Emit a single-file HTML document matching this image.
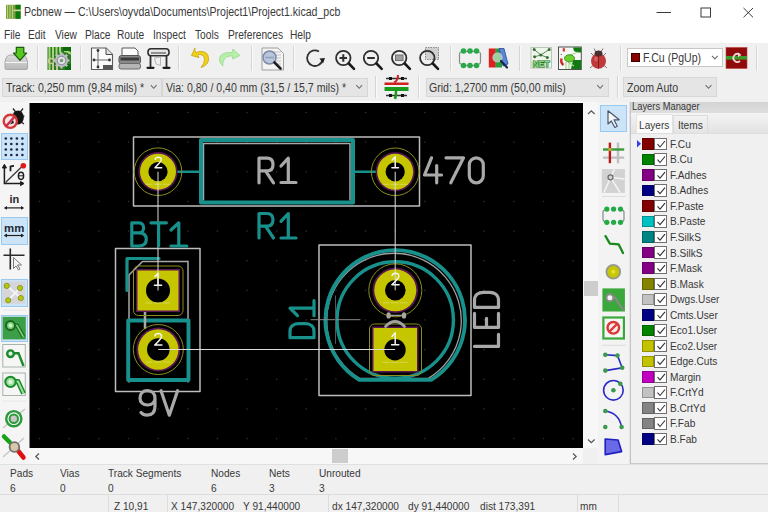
<!DOCTYPE html>
<html><head><meta charset="utf-8">
<style>
*{margin:0;padding:0;box-sizing:border-box}
html,body{width:768px;height:512px;overflow:hidden;background:#f0f0f0;font-family:"Liberation Sans",sans-serif;color:#000}
.a{position:absolute}
.t{position:absolute;white-space:nowrap;font-size:11px;line-height:13px;color:#383838;transform:scaleX(.92);transform-origin:0 0}
.combo{position:absolute;background:#e5e5e5;border:1px solid #d6d6d6}
.sep{position:absolute;width:1px;background:#d5d5d5;border-right:1px solid #fafafa;box-sizing:content-box}
.sw{position:absolute;width:12px;height:11.5px;left:642px;border:1px solid rgba(0,0,0,.25)}
.cb{position:absolute;width:12.5px;height:12.5px;left:654.3px;background:#fff;border:1px solid #707070}
.T{font-size:12px;line-height:14px;transform:scaleX(.88);color:#383838}

</style></head>
<body>
<div class="a" style="left:0;top:0;width:768px;height:43px;background:#fff"></div>
<div class="a" style="left:0;top:43px;width:768px;height:59px;background:#f0f0f0"></div>
<!-- toolbar separators -->
<div class="sep" style="left:37px;top:46px;height:25px"></div>
<div class="sep" style="left:80px;top:46px;height:25px"></div>
<div class="sep" style="left:178px;top:46px;height:25px"></div>
<div class="sep" style="left:251px;top:46px;height:25px"></div>
<div class="sep" style="left:293px;top:46px;height:25px"></div>
<div class="sep" style="left:450px;top:46px;height:25px"></div>
<div class="sep" style="left:519px;top:46px;height:25px"></div>
<div class="sep" style="left:620px;top:46px;height:25px"></div>
<div class="sep" style="left:756px;top:46px;height:25px"></div>
<div class="sep" style="left:375px;top:76px;height:22px"></div>
<div class="sep" style="left:418px;top:76px;height:22px"></div>
<div class="sep" style="left:617px;top:76px;height:22px"></div>
<!-- combos -->
<div class="combo" style="left:2px;top:78px;width:160px;height:19px"></div>
<div class="combo" style="left:162px;top:78px;width:206px;height:19px"></div>
<div class="combo" style="left:426px;top:78px;width:183px;height:19px"></div>
<div class="combo" style="left:623px;top:77px;width:94px;height:20px"></div>
<div class="a" style="left:627px;top:48px;width:96px;height:19px;background:#fff;border:1px solid #c8c8c8"></div>
<div class="a" style="left:631px;top:53px;width:9px;height:9px;background:#8a0000;border:1px solid #3a0000"></div>
<!-- left toolbar column -->
<div class="a" style="left:27px;top:100.7px;width:556px;height:348px;background:#fafafa"></div>
<div class="a" style="left:0;top:102px;width:29px;height:362px;background:#f5f5f5"></div>
<!-- scrollbars -->
<div class="a" style="left:583px;top:102px;width:15px;height:346px;background:#f7f7f7"></div>
<div class="a" style="left:584px;top:281px;width:14px;height:15px;background:#cdcdcd"></div>
<div class="a" style="left:27px;top:448px;width:556px;height:15.5px;background:#f7f7f7"></div>
<div class="a" style="left:332px;top:449px;width:16px;height:14px;background:#cdcdcd"></div>
<!-- right toolbar -->
<div class="a" style="left:598px;top:102px;width:32px;height:362px;background:#f3f3f3"></div>
<div class="a" style="left:629px;top:102px;width:1px;height:362px;background:#e4e4e4"></div><div class="a" style="left:630px;top:102px;width:1px;height:362px;background:#c4c4c4"></div>
<!-- layers manager -->
<div class="a" style="left:631px;top:102px;width:137px;height:11px;background:linear-gradient(#d4d4d4,#dedede)"></div>
<div class="a" style="left:631px;top:113px;width:137px;height:20px;background:linear-gradient(#f4f4f4,#e2e2e2)"></div>
<div class="a" style="left:636px;top:114px;width:37px;height:19px;background:#fbfbfb;border:1px solid #e4e4e4;border-bottom:none"></div>
<div class="a" style="left:673px;top:115px;width:35px;height:18px;background:linear-gradient(#f2f2f2,#e4e4e4);border:1px solid #dcdcdc;border-bottom:none"></div>
<div class="a" style="left:631px;top:133px;width:137px;height:331px;background:#f0f0f0;border-top:1px solid #dedede;border-bottom:1px solid #cacaca"></div>
<!-- highlighted toggle buttons -->
<div class="a" style="left:1px;top:133px;width:27px;height:27px;background:#cce4f7;border:1px solid #99c9ef"></div>
<div class="a" style="left:1px;top:217px;width:27px;height:28px;background:#cce4f7;border:1px solid #99c9ef"></div>
<div class="a" style="left:1px;top:279px;width:27px;height:28px;background:#cce4f7;border:1px solid #99c9ef"></div>
<div class="a" style="left:1px;top:315px;width:27px;height:27px;background:#cce4f7;border:1px solid #99c9ef"></div>
<div class="a" style="left:600px;top:105px;width:27px;height:27px;background:#cce4f7;border:1px solid #99c9ef"></div>
<!-- info panel / status lines -->
<div class="a" style="left:0;top:464px;width:768px;height:1px;background:#e0e0e0"></div>
<div class="a" style="left:0;top:494px;width:768px;height:1px;background:#dcdcdc"></div>
<div class="a" style="left:107.5px;top:495px;width:1px;height:17px;background:#dedede"></div>
<div class="a" style="left:167px;top:495px;width:1px;height:17px;background:#dedede"></div>
<div class="a" style="left:328px;top:495px;width:1px;height:17px;background:#dcdcdc"></div>
<div class="a" style="left:577px;top:495px;width:1px;height:17px;background:#dcdcdc"></div>
<div class="a" style="left:618px;top:495px;width:1px;height:17px;background:#dcdcdc"></div>
<!-- layer rows -->
<div class="sw" style="top:138.2px;background:#840000"></div>
<div class="cb" style="top:137.7px"></div>
<div class="sw" style="top:153.7px;background:#008400"></div>
<div class="cb" style="top:153.2px"></div>
<div class="sw" style="top:169.3px;background:#840084"></div>
<div class="cb" style="top:168.8px"></div>
<div class="sw" style="top:184.8px;background:#000084"></div>
<div class="cb" style="top:184.3px"></div>
<div class="sw" style="top:200.3px;background:#840000"></div>
<div class="cb" style="top:199.8px"></div>
<div class="sw" style="top:215.8px;background:#00c2c2"></div>
<div class="cb" style="top:215.3px"></div>
<div class="sw" style="top:231.4px;background:#008484"></div>
<div class="cb" style="top:230.9px"></div>
<div class="sw" style="top:246.9px;background:#840084"></div>
<div class="cb" style="top:246.4px"></div>
<div class="sw" style="top:262.4px;background:#840084"></div>
<div class="cb" style="top:261.9px"></div>
<div class="sw" style="top:278.0px;background:#848400"></div>
<div class="cb" style="top:277.5px"></div>
<div class="sw" style="top:293.5px;background:#c2c2c2"></div>
<div class="cb" style="top:293.0px"></div>
<div class="sw" style="top:309.0px;background:#000084"></div>
<div class="cb" style="top:308.5px"></div>
<div class="sw" style="top:324.6px;background:#008400"></div>
<div class="cb" style="top:324.1px"></div>
<div class="sw" style="top:340.1px;background:#c2c200"></div>
<div class="cb" style="top:339.6px"></div>
<div class="sw" style="top:355.6px;background:#c2c200"></div>
<div class="cb" style="top:355.1px"></div>
<div class="sw" style="top:371.1px;background:#c200c2"></div>
<div class="cb" style="top:370.6px"></div>
<div class="sw" style="top:386.7px;background:#c2c2c2"></div>
<div class="cb" style="top:386.2px"></div>
<div class="sw" style="top:402.2px;background:#848484"></div>
<div class="cb" style="top:401.7px"></div>
<div class="sw" style="top:417.7px;background:#848484"></div>
<div class="cb" style="top:417.2px"></div>
<div class="sw" style="top:433.3px;background:#000084"></div>
<div class="cb" style="top:432.8px"></div>

<svg class="a" style="left:29px;top:102px" width="554" height="346" viewBox="29 102 554 346">
<rect x="29.5" y="103" width="554" height="346" fill="#000"/>
<g fill="#333" id="grid"><rect x="38.8" y="111.8" width="1.3" height="1.3"/><rect x="38.8" y="141.4" width="1.3" height="1.3"/><rect x="38.8" y="171.1" width="1.3" height="1.3"/><rect x="38.8" y="200.8" width="1.3" height="1.3"/><rect x="38.8" y="230.4" width="1.3" height="1.3"/><rect x="38.8" y="260.0" width="1.3" height="1.3"/><rect x="38.8" y="289.7" width="1.3" height="1.3"/><rect x="38.8" y="319.3" width="1.3" height="1.3"/><rect x="38.8" y="349.0" width="1.3" height="1.3"/><rect x="38.8" y="378.6" width="1.3" height="1.3"/><rect x="38.8" y="408.3" width="1.3" height="1.3"/><rect x="38.8" y="437.9" width="1.3" height="1.3"/><rect x="68.5" y="111.8" width="1.3" height="1.3"/><rect x="68.5" y="141.4" width="1.3" height="1.3"/><rect x="68.5" y="171.1" width="1.3" height="1.3"/><rect x="68.5" y="200.8" width="1.3" height="1.3"/><rect x="68.5" y="230.4" width="1.3" height="1.3"/><rect x="68.5" y="260.0" width="1.3" height="1.3"/><rect x="68.5" y="289.7" width="1.3" height="1.3"/><rect x="68.5" y="319.3" width="1.3" height="1.3"/><rect x="68.5" y="349.0" width="1.3" height="1.3"/><rect x="68.5" y="378.6" width="1.3" height="1.3"/><rect x="68.5" y="408.3" width="1.3" height="1.3"/><rect x="68.5" y="437.9" width="1.3" height="1.3"/><rect x="98.1" y="111.8" width="1.3" height="1.3"/><rect x="98.1" y="141.4" width="1.3" height="1.3"/><rect x="98.1" y="171.1" width="1.3" height="1.3"/><rect x="98.1" y="200.8" width="1.3" height="1.3"/><rect x="98.1" y="230.4" width="1.3" height="1.3"/><rect x="98.1" y="260.0" width="1.3" height="1.3"/><rect x="98.1" y="289.7" width="1.3" height="1.3"/><rect x="98.1" y="319.3" width="1.3" height="1.3"/><rect x="98.1" y="349.0" width="1.3" height="1.3"/><rect x="98.1" y="378.6" width="1.3" height="1.3"/><rect x="98.1" y="408.3" width="1.3" height="1.3"/><rect x="98.1" y="437.9" width="1.3" height="1.3"/><rect x="127.8" y="111.8" width="1.3" height="1.3"/><rect x="127.8" y="141.4" width="1.3" height="1.3"/><rect x="127.8" y="171.1" width="1.3" height="1.3"/><rect x="127.8" y="200.8" width="1.3" height="1.3"/><rect x="127.8" y="230.4" width="1.3" height="1.3"/><rect x="127.8" y="260.0" width="1.3" height="1.3"/><rect x="127.8" y="289.7" width="1.3" height="1.3"/><rect x="127.8" y="319.3" width="1.3" height="1.3"/><rect x="127.8" y="349.0" width="1.3" height="1.3"/><rect x="127.8" y="378.6" width="1.3" height="1.3"/><rect x="127.8" y="408.3" width="1.3" height="1.3"/><rect x="127.8" y="437.9" width="1.3" height="1.3"/><rect x="157.4" y="111.8" width="1.3" height="1.3"/><rect x="157.4" y="141.4" width="1.3" height="1.3"/><rect x="157.4" y="171.1" width="1.3" height="1.3"/><rect x="157.4" y="200.8" width="1.3" height="1.3"/><rect x="157.4" y="230.4" width="1.3" height="1.3"/><rect x="157.4" y="260.0" width="1.3" height="1.3"/><rect x="157.4" y="289.7" width="1.3" height="1.3"/><rect x="157.4" y="319.3" width="1.3" height="1.3"/><rect x="157.4" y="349.0" width="1.3" height="1.3"/><rect x="157.4" y="378.6" width="1.3" height="1.3"/><rect x="157.4" y="408.3" width="1.3" height="1.3"/><rect x="157.4" y="437.9" width="1.3" height="1.3"/><rect x="187.1" y="111.8" width="1.3" height="1.3"/><rect x="187.1" y="141.4" width="1.3" height="1.3"/><rect x="187.1" y="171.1" width="1.3" height="1.3"/><rect x="187.1" y="200.8" width="1.3" height="1.3"/><rect x="187.1" y="230.4" width="1.3" height="1.3"/><rect x="187.1" y="260.0" width="1.3" height="1.3"/><rect x="187.1" y="289.7" width="1.3" height="1.3"/><rect x="187.1" y="319.3" width="1.3" height="1.3"/><rect x="187.1" y="349.0" width="1.3" height="1.3"/><rect x="187.1" y="378.6" width="1.3" height="1.3"/><rect x="187.1" y="408.3" width="1.3" height="1.3"/><rect x="187.1" y="437.9" width="1.3" height="1.3"/><rect x="216.7" y="111.8" width="1.3" height="1.3"/><rect x="216.7" y="141.4" width="1.3" height="1.3"/><rect x="216.7" y="171.1" width="1.3" height="1.3"/><rect x="216.7" y="200.8" width="1.3" height="1.3"/><rect x="216.7" y="230.4" width="1.3" height="1.3"/><rect x="216.7" y="260.0" width="1.3" height="1.3"/><rect x="216.7" y="289.7" width="1.3" height="1.3"/><rect x="216.7" y="319.3" width="1.3" height="1.3"/><rect x="216.7" y="349.0" width="1.3" height="1.3"/><rect x="216.7" y="378.6" width="1.3" height="1.3"/><rect x="216.7" y="408.3" width="1.3" height="1.3"/><rect x="216.7" y="437.9" width="1.3" height="1.3"/><rect x="246.3" y="111.8" width="1.3" height="1.3"/><rect x="246.3" y="141.4" width="1.3" height="1.3"/><rect x="246.3" y="171.1" width="1.3" height="1.3"/><rect x="246.3" y="200.8" width="1.3" height="1.3"/><rect x="246.3" y="230.4" width="1.3" height="1.3"/><rect x="246.3" y="260.0" width="1.3" height="1.3"/><rect x="246.3" y="289.7" width="1.3" height="1.3"/><rect x="246.3" y="319.3" width="1.3" height="1.3"/><rect x="246.3" y="349.0" width="1.3" height="1.3"/><rect x="246.3" y="378.6" width="1.3" height="1.3"/><rect x="246.3" y="408.3" width="1.3" height="1.3"/><rect x="246.3" y="437.9" width="1.3" height="1.3"/><rect x="276.0" y="111.8" width="1.3" height="1.3"/><rect x="276.0" y="141.4" width="1.3" height="1.3"/><rect x="276.0" y="171.1" width="1.3" height="1.3"/><rect x="276.0" y="200.8" width="1.3" height="1.3"/><rect x="276.0" y="230.4" width="1.3" height="1.3"/><rect x="276.0" y="260.0" width="1.3" height="1.3"/><rect x="276.0" y="289.7" width="1.3" height="1.3"/><rect x="276.0" y="319.3" width="1.3" height="1.3"/><rect x="276.0" y="349.0" width="1.3" height="1.3"/><rect x="276.0" y="378.6" width="1.3" height="1.3"/><rect x="276.0" y="408.3" width="1.3" height="1.3"/><rect x="276.0" y="437.9" width="1.3" height="1.3"/><rect x="305.6" y="111.8" width="1.3" height="1.3"/><rect x="305.6" y="141.4" width="1.3" height="1.3"/><rect x="305.6" y="171.1" width="1.3" height="1.3"/><rect x="305.6" y="200.8" width="1.3" height="1.3"/><rect x="305.6" y="230.4" width="1.3" height="1.3"/><rect x="305.6" y="260.0" width="1.3" height="1.3"/><rect x="305.6" y="289.7" width="1.3" height="1.3"/><rect x="305.6" y="319.3" width="1.3" height="1.3"/><rect x="305.6" y="349.0" width="1.3" height="1.3"/><rect x="305.6" y="378.6" width="1.3" height="1.3"/><rect x="305.6" y="408.3" width="1.3" height="1.3"/><rect x="305.6" y="437.9" width="1.3" height="1.3"/><rect x="335.3" y="111.8" width="1.3" height="1.3"/><rect x="335.3" y="141.4" width="1.3" height="1.3"/><rect x="335.3" y="171.1" width="1.3" height="1.3"/><rect x="335.3" y="200.8" width="1.3" height="1.3"/><rect x="335.3" y="230.4" width="1.3" height="1.3"/><rect x="335.3" y="260.0" width="1.3" height="1.3"/><rect x="335.3" y="289.7" width="1.3" height="1.3"/><rect x="335.3" y="319.3" width="1.3" height="1.3"/><rect x="335.3" y="349.0" width="1.3" height="1.3"/><rect x="335.3" y="378.6" width="1.3" height="1.3"/><rect x="335.3" y="408.3" width="1.3" height="1.3"/><rect x="335.3" y="437.9" width="1.3" height="1.3"/><rect x="364.9" y="111.8" width="1.3" height="1.3"/><rect x="364.9" y="141.4" width="1.3" height="1.3"/><rect x="364.9" y="171.1" width="1.3" height="1.3"/><rect x="364.9" y="200.8" width="1.3" height="1.3"/><rect x="364.9" y="230.4" width="1.3" height="1.3"/><rect x="364.9" y="260.0" width="1.3" height="1.3"/><rect x="364.9" y="289.7" width="1.3" height="1.3"/><rect x="364.9" y="319.3" width="1.3" height="1.3"/><rect x="364.9" y="349.0" width="1.3" height="1.3"/><rect x="364.9" y="378.6" width="1.3" height="1.3"/><rect x="364.9" y="408.3" width="1.3" height="1.3"/><rect x="364.9" y="437.9" width="1.3" height="1.3"/><rect x="394.6" y="111.8" width="1.3" height="1.3"/><rect x="394.6" y="141.4" width="1.3" height="1.3"/><rect x="394.6" y="171.1" width="1.3" height="1.3"/><rect x="394.6" y="200.8" width="1.3" height="1.3"/><rect x="394.6" y="230.4" width="1.3" height="1.3"/><rect x="394.6" y="260.0" width="1.3" height="1.3"/><rect x="394.6" y="289.7" width="1.3" height="1.3"/><rect x="394.6" y="319.3" width="1.3" height="1.3"/><rect x="394.6" y="349.0" width="1.3" height="1.3"/><rect x="394.6" y="378.6" width="1.3" height="1.3"/><rect x="394.6" y="408.3" width="1.3" height="1.3"/><rect x="394.6" y="437.9" width="1.3" height="1.3"/><rect x="424.2" y="111.8" width="1.3" height="1.3"/><rect x="424.2" y="141.4" width="1.3" height="1.3"/><rect x="424.2" y="171.1" width="1.3" height="1.3"/><rect x="424.2" y="200.8" width="1.3" height="1.3"/><rect x="424.2" y="230.4" width="1.3" height="1.3"/><rect x="424.2" y="260.0" width="1.3" height="1.3"/><rect x="424.2" y="289.7" width="1.3" height="1.3"/><rect x="424.2" y="319.3" width="1.3" height="1.3"/><rect x="424.2" y="349.0" width="1.3" height="1.3"/><rect x="424.2" y="378.6" width="1.3" height="1.3"/><rect x="424.2" y="408.3" width="1.3" height="1.3"/><rect x="424.2" y="437.9" width="1.3" height="1.3"/><rect x="453.9" y="111.8" width="1.3" height="1.3"/><rect x="453.9" y="141.4" width="1.3" height="1.3"/><rect x="453.9" y="171.1" width="1.3" height="1.3"/><rect x="453.9" y="200.8" width="1.3" height="1.3"/><rect x="453.9" y="230.4" width="1.3" height="1.3"/><rect x="453.9" y="260.0" width="1.3" height="1.3"/><rect x="453.9" y="289.7" width="1.3" height="1.3"/><rect x="453.9" y="319.3" width="1.3" height="1.3"/><rect x="453.9" y="349.0" width="1.3" height="1.3"/><rect x="453.9" y="378.6" width="1.3" height="1.3"/><rect x="453.9" y="408.3" width="1.3" height="1.3"/><rect x="453.9" y="437.9" width="1.3" height="1.3"/><rect x="483.5" y="111.8" width="1.3" height="1.3"/><rect x="483.5" y="141.4" width="1.3" height="1.3"/><rect x="483.5" y="171.1" width="1.3" height="1.3"/><rect x="483.5" y="200.8" width="1.3" height="1.3"/><rect x="483.5" y="230.4" width="1.3" height="1.3"/><rect x="483.5" y="260.0" width="1.3" height="1.3"/><rect x="483.5" y="289.7" width="1.3" height="1.3"/><rect x="483.5" y="319.3" width="1.3" height="1.3"/><rect x="483.5" y="349.0" width="1.3" height="1.3"/><rect x="483.5" y="378.6" width="1.3" height="1.3"/><rect x="483.5" y="408.3" width="1.3" height="1.3"/><rect x="483.5" y="437.9" width="1.3" height="1.3"/><rect x="513.2" y="111.8" width="1.3" height="1.3"/><rect x="513.2" y="141.4" width="1.3" height="1.3"/><rect x="513.2" y="171.1" width="1.3" height="1.3"/><rect x="513.2" y="200.8" width="1.3" height="1.3"/><rect x="513.2" y="230.4" width="1.3" height="1.3"/><rect x="513.2" y="260.0" width="1.3" height="1.3"/><rect x="513.2" y="289.7" width="1.3" height="1.3"/><rect x="513.2" y="319.3" width="1.3" height="1.3"/><rect x="513.2" y="349.0" width="1.3" height="1.3"/><rect x="513.2" y="378.6" width="1.3" height="1.3"/><rect x="513.2" y="408.3" width="1.3" height="1.3"/><rect x="513.2" y="437.9" width="1.3" height="1.3"/><rect x="542.9" y="111.8" width="1.3" height="1.3"/><rect x="542.9" y="141.4" width="1.3" height="1.3"/><rect x="542.9" y="171.1" width="1.3" height="1.3"/><rect x="542.9" y="200.8" width="1.3" height="1.3"/><rect x="542.9" y="230.4" width="1.3" height="1.3"/><rect x="542.9" y="260.0" width="1.3" height="1.3"/><rect x="542.9" y="289.7" width="1.3" height="1.3"/><rect x="542.9" y="319.3" width="1.3" height="1.3"/><rect x="542.9" y="349.0" width="1.3" height="1.3"/><rect x="542.9" y="378.6" width="1.3" height="1.3"/><rect x="542.9" y="408.3" width="1.3" height="1.3"/><rect x="542.9" y="437.9" width="1.3" height="1.3"/><rect x="572.5" y="111.8" width="1.3" height="1.3"/><rect x="572.5" y="141.4" width="1.3" height="1.3"/><rect x="572.5" y="171.1" width="1.3" height="1.3"/><rect x="572.5" y="200.8" width="1.3" height="1.3"/><rect x="572.5" y="230.4" width="1.3" height="1.3"/><rect x="572.5" y="260.0" width="1.3" height="1.3"/><rect x="572.5" y="289.7" width="1.3" height="1.3"/><rect x="572.5" y="319.3" width="1.3" height="1.3"/><rect x="572.5" y="349.0" width="1.3" height="1.3"/><rect x="572.5" y="378.6" width="1.3" height="1.3"/><rect x="572.5" y="408.3" width="1.3" height="1.3"/><rect x="572.5" y="437.9" width="1.3" height="1.3"/></g>
<!-- R1 courtyard -->
<g fill="none" stroke-linecap="round" stroke-linejoin="round">
<rect x="133.5" y="137" width="286" height="69" stroke="#bdbdbd" stroke-width="1.5"/>
<rect x="115.5" y="248.5" width="84.5" height="143" stroke="#bdbdbd" stroke-width="1.5"/>
<rect x="319" y="245" width="152" height="150.5" stroke="#bdbdbd" stroke-width="1.5"/>
<!-- fab -->
<path d="M203.5 200V143.5H350V200" stroke="#a8a8a8" stroke-width="1.5"/>
<path d="M129 275L142.5 261.5H188V382M129 275V382" stroke="#a8a8a8" stroke-width="1.5"/>
<path d="M359.6 378.4A67.3 67.3 0 1 1 428.4 378.4Z" stroke="#a0a0a0" stroke-width="1.3"/>
<!-- R1 silk -->
<rect x="201" y="140" width="152" height="62.5" stroke="#18908b" stroke-width="4"/>
<path d="M177 171.8H199M355 171.8H376" stroke="#18908b" stroke-width="2.6"/>
<!-- BT1 silk -->
<path d="M127 290.5V258.5H159" stroke="#18908b" stroke-width="3.2"/>
<rect x="128.2" y="320.5" width="60.3" height="59.5" stroke="#18908b" stroke-width="3.9"/>
<path d="M145 312V328" stroke="#a8a8a8" stroke-width="2.5"/>
<!-- D1 silk -->
<path d="M359.2 379.8A69.8 69.8 0 1 1 431.2 379.8Z" stroke="#18908b" stroke-width="3.8"/>
<circle cx="395.2" cy="320" r="58.2" stroke="#18908b" stroke-width="3.4"/>
</g>
<!-- pads -->
<g>
<circle cx="158" cy="171.7" r="23.8" fill="none" stroke="#8c8c20" stroke-width="1"/>
<circle cx="158" cy="171.7" r="19.6" fill="#5a1650"/>
<circle cx="158" cy="171.7" r="18" fill="#c6c600"/>
<circle cx="158" cy="171.7" r="9.6" fill="#000"/>
<circle cx="395.2" cy="171.8" r="23.8" fill="none" stroke="#8c8c20" stroke-width="1"/>
<circle cx="395.2" cy="171.8" r="19.6" fill="#5a1650"/>
<circle cx="395.2" cy="171.8" r="18" fill="#c6c600"/>
<circle cx="395.2" cy="171.8" r="9.6" fill="#000"/>
<!-- BT1 pad1 square -->
<rect x="133.5" y="266" width="49.5" height="49.5" rx="5" fill="none" stroke="#8c8c20" stroke-width="1"/>
<rect x="136" y="269" width="44" height="43" fill="#5a1650"/>
<rect x="137.5" y="270.5" width="41" height="40" fill="#c6c600"/>
<circle cx="158" cy="290.5" r="12" fill="#000"/>
<circle cx="158.3" cy="349.5" r="25" fill="none" stroke="#8c8c20" stroke-width="1"/>
<circle cx="158.3" cy="349.5" r="22" fill="#5a1650"/>
<circle cx="158.3" cy="349.5" r="20.2" fill="#c6c600"/>
<circle cx="158.3" cy="349.5" r="11.3" fill="#000"/>
<!-- D1 pads -->
<circle cx="395.3" cy="290.3" r="26.5" fill="none" stroke="#8c8c20" stroke-width="1"/>
<circle cx="395.3" cy="290.3" r="22.8" fill="#5a1650"/>
<circle cx="395.3" cy="290.3" r="21" fill="#c6c600"/>
<circle cx="395.3" cy="290.3" r="10.3" fill="#000"/>
<rect x="369.5" y="324" width="52" height="51.5" rx="5" fill="none" stroke="#8c8c20" stroke-width="1"/>
<rect x="372" y="326.5" width="46.5" height="46" fill="#5a1650"/>
<rect x="373.5" y="328" width="43.5" height="43" fill="#c6c600"/>
<circle cx="395" cy="349.8" r="10.7" fill="#000"/>
</g>
<!-- D1 fab marks -->
<g fill="none" stroke="#a0a0a0" stroke-linecap="round">
<path d="M389 315.4H404" stroke-width="1.2"/>
<ellipse cx="388.6" cy="315.4" rx="2.2" ry="3.2" fill="#a8a8a0" stroke="none"/>
<ellipse cx="404" cy="315.4" rx="2.2" ry="3.2" fill="#a8a8a0" stroke="none"/>
<path d="M385.5 326.5Q395 316.5 404.5 326.5" stroke-width="2.8"/>
<path d="M311 319.7H360" stroke-width="1" stroke="#8a8a8a"/><path d="M335.5 296V343.5" stroke-width="1" stroke="#5a5555"/>
</g>
<!-- ratsnest -->
<g stroke="#dcdcdc" stroke-width="1" fill="none">
<path d="M158 171.7V290.5M395.2 171.8V290.3M158.3 349.5H395"/>
</g>
<!-- texts -->
<g fill="none" stroke-linecap="round" stroke-linejoin="round" stroke-width="3.2">
<g stroke="#a9a9a9">
<path d="M259 182.8V158.2H267C271.5 158.2 273 161 273 164.5C273 168 271.5 170.9 267 170.9H259M265.5 170.9L273.5 182.8"/>
<path d="M281 182.5H296M288.3 182.5V158.2L281 166"/>
<path d="M431.5 157.8L424.5 175H441.5M436.7 165.5V182.8"/>
<path d="M446 157.8H463.5L450.8 182.8"/>
<rect x="469.3" y="157.8" width="14" height="25" rx="7" ry="7"/>
</g>
<g stroke="#a9a9a9">
<path d="M155 398.5C155 393.5 152 390.7 147.5 390.7C143 390.7 140 393.5 140 398C140 402.5 143 405 147.5 405C152 405 155 402 155 398.5V406C155 412 152 415.2 147 415.2C144.5 415.2 142.5 414.2 141 412.5"/>
<path d="M161 390.7L169.3 415.2L177.6 390.7"/>
<g transform="translate(474.5,346.4) rotate(-90)">
<path d="M0 0V24H12"/>
<path d="M33 0H19V24H33M19 12H28"/>
<path d="M39 24V0H46C51.5 0 54 4 54 9V15C54 20 51.5 24 46 24Z"/>
</g>
</g>
<g stroke="#18908b" transform="translate(290,337.7) rotate(-90)">
<path d="M0 24V0H6.5C11.5 0 14 4 14 9V15C14 20 11.5 24 6.5 24Z"/>
<path d="M22 24H37M29.5 24V0L22 7.5"/>
</g>
<g stroke="#f4f4f4" stroke-width="1.5" fill="none">
<path d="M155.2 159.3C155.5 157.8 156.9 157.2 158.2 157.2C160.8 157.2 161.3 158.2 161.3 159.8C161.3 161.4 160.3 162.4 155.0 167.7H161.7"/>
<path d="M391.9 167.8H398.5M395.2 167.8V156.8L392.2 160.1"/>
<path d="M154.4 285.2H161.6M158.0 285.2V273.2L154.8 276.8"/>
<path d="M154.9 335.9C155.2 334.3 156.8 333.6 158.2 333.6C161.1 333.6 161.6 334.8 161.6 336.5C161.6 338.2 160.6 339.4 154.8 345.1H161.9"/>
<path d="M392.1 275.6C392.4 274.0 393.9 273.3 395.3 273.3C398.2 273.3 398.8 274.4 398.8 276.2C398.8 277.9 397.8 279.1 391.9 284.8H399.1"/>
<path d="M391.6 344.8H398.8M395.2 344.8V332.8L392.0 336.4"/>
</g>
<g fill="none" stroke="#e8e8b0" stroke-width=".7" opacity=".7">
<path d="M146.0 184.2H152.0M154.0 184.2H161.0M163.0 184.2H170.0" stroke-dasharray="1 .6"/>
<path d="M383.2 184.3H389.2M391.2 184.3H398.2M400.2 184.3H407.2" stroke-dasharray="1 .6"/>
<path d="M146.0 303.0H152.0M154.0 303.0H161.0M163.0 303.0H170.0" stroke-dasharray="1 .6"/>
<path d="M146.3 362.0H152.3M154.3 362.0H161.3M163.3 362.0H170.3" stroke-dasharray="1 .6"/>
<path d="M383.3 302.8H389.3M391.3 302.8H398.3M400.3 302.8H407.3" stroke-dasharray="1 .6"/>
<path d="M383.0 362.3H389.0M391.0 362.3H398.0M400.0 362.3H407.0" stroke-dasharray="1 .6"/>
</g>

<g stroke="#18908b">
<path d="M259 238V213.5H267C271.5 213.5 273 216.3 273 219.8C273 223.3 271.5 226.2 267 226.2H259M265.5 226.2L273.5 238"/>
<path d="M281 238H296M288.3 238V213.5L281 221.3"/>
<path d="M131.8 246V222.8H139C142 222.8 143.6 225 143.6 227.8C143.6 230.6 142 232.9 139 232.9H131.8M139 232.9C143.5 232.9 146.3 235 146.3 239.3C146.3 243.6 143.5 246 139 246H131.8"/>
<path d="M151 222.8H166.4M158.6 222.8V246"/>
<path d="M171 246H186.8M178.8 246V222.8L171 230"/>
</g>
</g>
</svg>
<svg class="a" style="left:0;top:0" width="768" height="512" viewBox="0 0 768 512">
<defs>
<linearGradient id="gtray" x1="0" y1="0" x2="0" y2="1"><stop offset="0" stop-color="#dcdcdc"/><stop offset="1" stop-color="#b8b8b8"/></linearGradient>
</defs>
<!-- save -->
<g>
<path d="M5 62Q6 55 10.5 55H22Q26.5 55 27.5 62V68Q27.5 69.5 26 69.5H6.5Q5 69.5 5 68Z" fill="url(#gtray)" stroke="#a8a8a8" stroke-width="1"/>
<path d="M5.5 62.5H27" stroke="#f4f4f4" stroke-width="1"/>
<path d="M16.3 47.3H23.8V53H26.6L20 60.3L13.5 53H16.3Z" fill="#58c820" stroke="#1c5a10" stroke-width="1.2" stroke-linejoin="round"/>
</g>
<!-- pcb setup -->
<g>
<rect x="47.5" y="47" width="23.5" height="23" fill="#2a7a22"/>
<path d="M49.5 47V70M53 47V57Q53 60 56 62M56.5 47V54Q56.5 57 60 59M60 47V51Q60 54 64 55M64 51Q68 51 71 54" stroke="#a8d47a" stroke-width="2" fill="none"/>
<path d="M53 63V70M57 65V70" stroke="#d8d0a0" stroke-width="1.8"/>
<rect x="63" y="47" width="8" height="4" fill="#0a6a0a"/>
<rect x="65" y="64" width="6" height="6" fill="#0a6a0a"/>
<circle cx="51" cy="61" r="2.5" fill="none" stroke="#c8c890" stroke-width="1.3"/>
<circle cx="61.5" cy="60.5" r="6.6" fill="#b8b8c0"/>
<path d="M61.5 52.5V55M61.5 66V68.5M53.5 60.5H56M67 60.5H69.5M55.8 54.8L57.6 56.6M65.4 64.4L67.2 66.2M67.2 54.8L65.4 56.6M57.6 64.4L55.8 66.2" stroke="#c0c0c8" stroke-width="2.2"/>
<circle cx="61.5" cy="60.5" r="4.2" fill="#e0e0e6" stroke="#8a8a96" stroke-width="1"/>
<circle cx="61.5" cy="60.5" r="1.8" fill="#7a9a7a"/>
</g>
<!-- page settings -->
<g>
<path d="M91.5 48H106L112.5 54.5V69.5H91.5Z" fill="#fafafa" stroke="#5a5a5a" stroke-width="1.1" stroke-linejoin="round"/>
<path d="M106 48V54.5H112.5" fill="#e0e0e0" stroke="#4a4a4a" stroke-width="1"/>
<path d="M98 50V67.5M93.5 60H110" stroke="#6a6a6a" stroke-width="1" fill="none"/>
<circle cx="98" cy="50.5" r="1.4" fill="#333"/><circle cx="98" cy="67" r="1.4" fill="#333"/>
<circle cx="94" cy="60" r="1.4" fill="#333"/><circle cx="109.5" cy="60" r="1.4" fill="#333"/>
<rect x="103" y="65" width="9" height="4.5" fill="#555"/>
</g>
<!-- print -->
<g>
<path d="M122 48H135L138 51V57H122Z" fill="#fbfbfb" stroke="#5a5a5a" stroke-width="1"/>
<rect x="119" y="55.5" width="21.5" height="8.5" rx="2.5" fill="#8a8a8a" stroke="#555" stroke-width="1"/>
<rect x="120.5" y="57.5" width="18.5" height="3" fill="#3c3c3c"/>
<rect x="119" y="63.5" width="21.5" height="5.5" rx="2" fill="#b5b5b5" stroke="#6a6a6a" stroke-width="1"/>
</g>
<!-- plot -->
<g>
<rect x="148" y="48.8" width="21" height="7" rx="3" fill="#e6e6e6" stroke="#2e2e2e" stroke-width="1.6"/>
<path d="M151 53H166" stroke="#555" stroke-width="1.2"/>
<path d="M150.5 56V67M166.5 56V67" stroke="#2e2e2e" stroke-width="1.8"/>
<path d="M147.5 67.8H153.5M163.5 67.8H169.5" stroke="#1e1e1e" stroke-width="2.2" stroke-linecap="round"/>
<path d="M154.5 58L160.5 57V65.5L156 64Z" fill="#f0f0f0" stroke="#a8a8a8" stroke-width=".8"/>
</g>
<!-- undo -->
<path d="M196 53Q194 49 195 48L191.5 55.5L199 57.5Q197 55 198.5 54.5Q204 54 204.5 59Q205 63 201 67.5Q208.5 65 208.5 59Q208.5 51 200 51.5Q197.5 51.7 196 53Z" fill="#f1d21a" stroke="#c8a000" stroke-width=".8" stroke-linejoin="round"/>
<!-- redo -->
<path d="M232 52.5L233 49L240 55.5L232.5 59L233 56Q225 55 223 62Q222.5 64.5 223 66Q218.5 62 219.5 58Q221 52 232 52.5Z" fill="#b4f0a8" stroke="#9ad690" stroke-width=".8" stroke-linejoin="round"/>
<!-- zoom page -->
<g>
<path d="M262 48H278L283.5 53.5V70H262Z" fill="#f4f4f4" stroke="#9e9e9e" stroke-width="1"/>
<path d="M272 52H281M272 55H281M274 58H281M275 61H281M275 64H281" stroke="#b8b8b8" stroke-width=".8"/>
<circle cx="269.5" cy="57.5" r="6.5" fill="#b9c6dc" stroke="#7c8aa4" stroke-width="1.5"/>
<path d="M265 57.5H274" stroke="#8ea0c0" stroke-width="1.5"/>
<path d="M274.5 62.5L280.5 68.5" stroke="#1e1e1e" stroke-width="2.6" stroke-linecap="round"/>
</g>
<!-- redraw -->
<g fill="none">
<path d="M322.5 60A7.8 7.8 0 1 1 319 51.5" stroke="#303030" stroke-width="1.8"/>
<path d="M319.5 58.5L325 58L323 63.5Z" fill="#1e1e1e"/>
</g>
<!-- zoom in/out/fit/sel -->
<g fill="none" stroke="#2e2e2e">
<circle cx="343.3" cy="58" r="7.2" stroke-width="1.8"/>
<path d="M339.5 58H347M343.3 54.3V61.7" stroke-width="2"/>
<path d="M348.8 63.5L354 68.8" stroke-width="2.6" stroke-linecap="round" stroke="#1a1a1a"/>
<circle cx="371" cy="58" r="7.2" stroke-width="1.8"/>
<path d="M367.2 58H374.8" stroke-width="2"/>
<path d="M376.5 63.5L381.7 68.8" stroke-width="2.6" stroke-linecap="round" stroke="#1a1a1a"/>
<circle cx="399.2" cy="58" r="7.2" stroke-width="1.8"/>
<rect x="395.5" y="55" width="7.5" height="5.5" stroke="#707070" fill="#a0a0a0" stroke-width="1"/>
<path d="M404.7 63.5L409.9 68.8" stroke-width="2.6" stroke-linecap="round" stroke="#1a1a1a"/>
<rect x="425.5" y="47.5" width="13" height="12" fill="#cfcfcf" stroke="#8a8a8a" stroke-width="1" stroke-dasharray="1.5 1"/>
<circle cx="427.3" cy="58" r="7.2" stroke-width="1.8"/>
<path d="M432.8 63.5L438 68.8" stroke-width="2.6" stroke-linecap="round" stroke="#1a1a1a"/>
</g>
<!-- footprint -->
<g>
<path d="M461 52Q459.5 52 459.5 54V62Q459.5 64 461 64M479 52Q480.5 52 480.5 54V62Q480.5 64 479 64" fill="none" stroke="#8a8a8a" stroke-width="1.2"/>
<path d="M462 51.5H478M462 65.5H478" stroke="#8a8a8a" stroke-width="1"/>
<g fill="#2aa84a"><circle cx="463.5" cy="51" r="2.8"/><circle cx="470" cy="51" r="2.8"/><circle cx="476.5" cy="51" r="2.8"/>
<circle cx="463.5" cy="65.5" r="2.8"/><circle cx="470" cy="65.5" r="2.8"/><circle cx="476.5" cy="65.5" r="2.8"/></g>
</g>
<!-- inspect footprint -->
<g>
<rect x="488.8" y="48.5" width="7" height="19" fill="#dd2020"/>
<rect x="495.5" y="48.5" width="6.5" height="19" fill="#2a9a3a"/>
<path d="M499 48.5H504L508 64L503 66Z" fill="#5a86d8" stroke="#2a4a9a" stroke-width=".8"/>
<circle cx="497.5" cy="57.5" r="4.5" fill="#9ad0a0" stroke="#c8c8c8" stroke-width="1.2"/>
<path d="M501 61L507 67.5" stroke="#1a2a4a" stroke-width="2.2" stroke-linecap="round"/>
</g>
<!-- NET -->
<g>
<rect x="531" y="47.5" width="20.5" height="20.5" fill="#eef6ea" stroke="#b8c8b4" stroke-width="1"/>
<path d="M534.2 49.5L540.8 55L549.2 49.5M534.6 56.8L540.8 55L547.3 57.5" stroke="#5a8a5a" stroke-width="1" fill="none"/>
<g fill="#3a6a3a"><circle cx="534.2" cy="49.5" r="1.5"/><circle cx="549.2" cy="49.5" r="1.5"/><circle cx="540.8" cy="55" r="1.5"/><circle cx="534.6" cy="56.8" r="1.5"/><circle cx="547.3" cy="57.5" r="1.5"/></g>
<text x="541.2" y="67.4" font-family="Liberation Sans" font-weight="bold" font-size="8.5" fill="#8ed88e" stroke="#1a6a1a" stroke-width="1.1" paint-order="stroke" text-anchor="middle" textLength="17" lengthAdjust="spacingAndGlyphs">NET</text>
</g>
<!-- update pcb -->
<g>
<rect x="558.5" y="47" width="22.8" height="22.5" fill="#f6f8f6" stroke="#505050" stroke-width="1"/>
<path d="M573 47.5H581V52.5Q577 53 574 51Z" fill="#107a10"/>
<path d="M573 60H581V69H571Z" fill="#107a10"/>
<path d="M568 56Q573 54 578 52M568 62L574 66M566 62V69M569 62V69" stroke="#a8d890" stroke-width="1.3" fill="none"/>
<ellipse cx="569.5" cy="58.3" rx="5" ry="3.6" fill="#6ad02a" stroke="#2a7a1a" stroke-width=".8"/>
<path d="M563.8 48.2V51.5" stroke="#d83030" stroke-width="2.2"/>
<path d="M561.5 58.5Q560.5 63 563.5 65" stroke="#d02828" stroke-width="2.4" fill="none"/>
<path d="M560.5 54.5H562" stroke="#8a8a8a" stroke-width="1"/>
</g>
<!-- bug -->
<g>
<path d="M591 53L594 56M606 53L603 56M590 68L593.5 65M607 68L603.5 65M594 48.5L596 52M603 48.5L601 52" stroke="#7a7a7a" stroke-width="1" fill="none"/>
<ellipse cx="598.5" cy="61" rx="7.5" ry="7.8" fill="#c03838"/>
<ellipse cx="598.5" cy="53.5" rx="4" ry="3" fill="#4a3030"/>
<path d="M598.5 54V68.5" stroke="#6a1a1a" stroke-width=".8"/>
<ellipse cx="596" cy="59" rx="2" ry="2.5" fill="#e07a7a" opacity=".6"/>
</g>
<!-- layer pair -->
<g>
<rect x="726" y="47.5" width="21" height="21" fill="#8f0a0a" stroke="#c04040" stroke-width=".6"/>
<rect x="726" y="56" width="21" height="3.6" fill="#3c9a2a"/>
<path d="M739.5 54.5A4 4 0 1 0 740 61" stroke="#f0d8d8" stroke-width="1.8" fill="none"/>
<path d="M738 52.5L741.5 55L738 57Z" fill="#f0d8d8"/>
</g>
<!-- combo chevrons -->
<g fill="none" stroke="#6e6e6e" stroke-width="1.1">
<path d="M150.8 85.2L153.7 88.3L156.6 85.2"/>
<path d="M356.3 85.2L359.2 88.3L362.1 85.2"/>
<path d="M597.2 85.2L600.1 88.3L603 85.2"/>
<path d="M705.6 85.2L708.5 88.3L711.4 85.2"/>
<path d="M712 55.8L714.9 58.9L717.8 55.8"/>
</g>
<!-- asterisk-ish -->
<!-- track/via icon in tb2 -->
<g>
<path d="M386 78.5H407M386 95.5H407" stroke="#333" stroke-width="1.5"/>
<path d="M389 78.5H392M401 78.5H404M389 95.5H392M401 95.5H404" stroke="#111" stroke-width="3"/>
<rect x="384.5" y="82.5" width="24" height="2.5" fill="#d02020"/>
<rect x="384.5" y="87" width="24" height="4" fill="#1a9a1a"/>
<path d="M398 75Q398 81 394 82.5" stroke="#d02020" stroke-width="2" fill="none"/>
<path d="M396 91Q396 96 395 99" stroke="#1a9a1a" stroke-width="2.5" fill="none"/>
</g>
<!-- layer checkboxes -->
<g fill="none" stroke="#333" stroke-width="1.1" id="checks">
<path d="M657.5 144.2L660 147.0L665 141.0"/>
<path d="M657.5 159.7L660 162.5L665 156.5"/>
<path d="M657.5 175.3L660 178.1L665 172.1"/>
<path d="M657.5 190.8L660 193.6L665 187.6"/>
<path d="M657.5 206.3L660 209.1L665 203.1"/>
<path d="M657.5 221.8L660 224.6L665 218.6"/>
<path d="M657.5 237.4L660 240.2L665 234.2"/>
<path d="M657.5 252.9L660 255.7L665 249.7"/>
<path d="M657.5 268.4L660 271.2L665 265.2"/>
<path d="M657.5 284.0L660 286.8L665 280.8"/>
<path d="M657.5 299.5L660 302.3L665 296.3"/>
<path d="M657.5 315.0L660 317.8L665 311.8"/>
<path d="M657.5 330.6L660 333.4L665 327.4"/>
<path d="M657.5 346.1L660 348.9L665 342.9"/>
<path d="M657.5 361.6L660 364.4L665 358.4"/>
<path d="M657.5 377.1L660 379.9L665 373.9"/>
<path d="M657.5 392.7L660 395.5L665 389.5"/>
<path d="M657.5 408.2L660 411.0L665 405.0"/>
<path d="M657.5 423.7L660 426.5L665 420.5"/>
<path d="M657.5 439.3L660 442.1L665 436.1"/>
</g>
<!-- layer triangle -->
<path d="M637 140L641 143.8L637 147.6Z" fill="#3a3af0"/>
</svg>

<svg class="a" style="left:0;top:0" width="768" height="512" viewBox="0 0 768 512">
<!-- title icon -->
<g>
<rect x="6" y="4.8" width="14.6" height="14" fill="#7aa040"/>
<path d="M7.5 5V18.5M10 5V18.5M12.5 5V18.5" stroke="#b8d078" stroke-width="1"/>
<rect x="15.5" y="4.8" width="5.1" height="5" fill="#0a7a0a"/>
<rect x="15.5" y="11" width="5.1" height="7.8" fill="#0a7a0a"/>
<rect x="13.5" y="9.6" width="7.1" height="1.6" fill="#d8d0a0"/>
</g>
<!-- window controls -->
<g stroke="#3a3a3a" stroke-width="1" fill="none">
<path d="M656.5 12.5H671"/>
<rect x="701" y="8" width="9.5" height="9"/>
<path d="M743.5 8L753 17.3M753 8L743.5 17.3"/>
</g>
<!-- LEFT TOOLBAR -->
<!-- drc off -->
<g>
<path d="M13 108.5L16 112.5M23 108.5L20 112.5M24.5 116L21 117M24 124L20.5 121.5M12 126L15 122.5" stroke="#2a2a2a" stroke-width="1.3"/>
<ellipse cx="18" cy="117.5" rx="5.8" ry="7" fill="#141414"/>
<circle cx="10.3" cy="121.3" r="6.6" fill="#f6e4e4" stroke="#d23a3a" stroke-width="2.4"/>
<path d="M14.3 117L6.5 125.8" stroke="#c8304a" stroke-width="2.4"/>
<path d="M13 120L10 124.5L14 123Z" fill="#202020"/>
</g>
<!-- grid dots -->
<g fill="#1e2a4a">
<circle cx="5.8" cy="138.5" r="1.3"/><circle cx="11.3" cy="138.5" r="1.3"/><circle cx="16.9" cy="138.5" r="1.3"/><circle cx="22.4" cy="138.5" r="1.3"/><circle cx="5.8" cy="144" r="1.3"/><circle cx="11.3" cy="144" r="1.3"/><circle cx="16.9" cy="144" r="1.3"/><circle cx="22.4" cy="144" r="1.3"/><circle cx="5.8" cy="149.5" r="1.3"/><circle cx="11.3" cy="149.5" r="1.3"/><circle cx="16.9" cy="149.5" r="1.3"/><circle cx="22.4" cy="149.5" r="1.3"/><circle cx="5.8" cy="155" r="1.3"/><circle cx="11.3" cy="155" r="1.3"/><circle cx="16.9" cy="155" r="1.3"/><circle cx="22.4" cy="155" r="1.3"/>
</g>
<!-- polar -->
<g fill="none" stroke="#1e1e1e">
<path d="M4.4 165.5V183.5H23" stroke-width="1.5"/>
<path d="M2.3 168L4.4 164.3L6.5 168Z" fill="#1e1e1e" stroke-width="1"/>
<path d="M20.5 181.4L24 183.5L20.5 185.6Z" fill="#1e1e1e" stroke-width="1"/>
<path d="M5.5 182.5L22.5 166" stroke="#3a3a3a" stroke-width="1.3"/>
<path d="M10.5 171.2V166.5Q11.5 165.8 14 165.8" stroke-width="1.8"/>
<ellipse cx="21" cy="175.8" rx="2.6" ry="3.6" stroke-width="1.5"/>
<path d="M18.5 175.8H23.5" stroke-width="1"/>
</g>
<circle cx="23.3" cy="165.8" r="2.8" fill="#e01818"/>
<!-- in -->
<g>
<text x="14.3" y="203.2" font-family="Liberation Sans" font-weight="bold" font-size="11" fill="#2a2a2a" text-anchor="middle">in</text>
<path d="M5 207.9H23" stroke="#1e1e1e" stroke-width="1.2"/>
<path d="M3.8 207.9L7 206V209.8Z M24.2 207.9L21 206V209.8Z" fill="#1e1e1e"/>
</g>
<!-- mm -->
<g>
<text x="4" y="231.8" font-family="Liberation Sans" font-weight="bold" font-size="10.5" fill="#1e2a3a" textLength="20.3" lengthAdjust="spacingAndGlyphs">mm</text>
<path d="M5 235.5H23" stroke="#1e1e1e" stroke-width="1.2"/>
<path d="M3.8 235.5L7 233.6V237.4Z M24.2 235.5L21 233.6V237.4Z" fill="#1e1e1e"/>
</g>
<!-- cursor crosshair -->
<g>
<path d="M10.3 248.5V269.5M3.5 255.3H24.5" stroke="#2a2a2a" stroke-width="1.6"/>
<path d="M13.5 257.5V268.5L16 266L18.5 270L20 269L17.5 265H21.5Z" fill="#f4f4f4" stroke="#7a7a7a" stroke-width="1"/>
</g>
<!-- ratsnest -->
<g>
<rect x="2.5" y="281.5" width="22.7" height="22.3" fill="#d6d6da"/>
<path d="M7 286L20.8 298M20 288L8.2 300.3" stroke="#f4f4f8" stroke-width="2"/>
<g fill="#b4c818" stroke="#7a8a10" stroke-width=".8">
<circle cx="6.8" cy="285.9" r="2.6"/><circle cx="20" cy="288" r="2.6"/><circle cx="8.2" cy="300.3" r="2.6"/><circle cx="20.8" cy="298" r="2.6"/>
</g>
</g>
<path d="M3 310H26" stroke="#e6e6e6" stroke-width="1"/>
<!-- track (active) -->
<g>
<rect x="2.6" y="316.8" width="23.2" height="22.6" fill="#3c9e48"/>
<path d="M14.5 325.5H17L23.5 337" stroke="#1a6a1a" stroke-width="4" fill="none" stroke-linejoin="round"/>
<path d="M14.5 325.5H17L23.5 337" stroke="#7ad07a" stroke-width="1.6" fill="none" stroke-linejoin="round"/>
<circle cx="10.5" cy="325.6" r="4.5" fill="#7ad07a" stroke="#1a6a1a" stroke-width="2"/>
<circle cx="10.5" cy="325.6" r="2" fill="#c8f4c8"/>
</g>
<!-- track sketch -->
<g>
<rect x="2.8" y="344.5" width="22.5" height="22.5" fill="#f6f6f6" stroke="#a8b4a8" stroke-width="1"/>
<circle cx="10.5" cy="353.7" r="3.3" fill="#e0f0e0" stroke="#1a8a2a" stroke-width="2.4"/>
<path d="M14 353.3H18.5L23.5 366" stroke="#1a8a2a" stroke-width="2.4" fill="none"/>
</g>
<!-- track outline -->
<g>
<rect x="2.8" y="373" width="22.5" height="22.5" fill="#f6f6f6" stroke="#a8b4a8" stroke-width="1"/>
<path d="M15 381.5H18L23.5 393.5" stroke="#1a8a2a" stroke-width="5" fill="none" stroke-linejoin="round"/>
<path d="M15 381.5H18L23.5 393.5" stroke="#9ae09a" stroke-width="2" fill="none" stroke-linejoin="round"/>
<circle cx="10.5" cy="381.9" r="5.2" fill="#9ae09a" stroke="#1a8a2a" stroke-width="2"/>
<circle cx="10.5" cy="381.9" r="2.2" fill="#e0f4e0"/>
</g>
<path d="M3 401H26" stroke="#e6e6e6" stroke-width="1"/>
<!-- via -->
<g>
<path d="M3 428L25 409" stroke="#c8c8c8" stroke-width="1.5"/>
<circle cx="13.8" cy="418.7" r="7.6" fill="#f4f4f4" stroke="#2a9a3a" stroke-width="2.4"/>
<circle cx="13.8" cy="418.7" r="4.2" fill="#c8c8c8" stroke="#2a9a3a" stroke-width="2"/>
</g>
<!-- microwave -->
<g>
<path d="M3 457L24 438" stroke="#c8c8c8" stroke-width="1.5"/>
<path d="M4 436.5L10 442.5" stroke="#18a018" stroke-width="4.5" stroke-linecap="round"/>
<path d="M17.5 450L23.5 457.5" stroke="#e01010" stroke-width="4.5" stroke-linecap="round"/>
<circle cx="14.4" cy="447" r="4.8" fill="#d8c8a8" stroke="#707070" stroke-width="1.8"/>
</g>
<!-- scroll arrows -->
<g fill="none" stroke="#555" stroke-width="1.2">
<path d="M588 114L591.3 110.8L594.6 114"/>
<path d="M588 439.5L591.3 442.7L594.6 439.5"/>
<path d="M39 453.5L35.8 456.5L39 459.5"/>
<path d="M573 453.5L576.2 456.5L573 459.5"/>
</g>
<!-- RIGHT TOOLBAR -->
<path d="M608 110.8V124L611.3 121L614.8 127.5L617.2 126.3L614 119.8H619.2Z" fill="#f8f8f8" stroke="#4a5670" stroke-width="1.2" stroke-linejoin="round"/>
<g>
<path d="M618 142.6V163.2M603 157.6H624.2" stroke="#c0c0c0" stroke-width="2.4"/>
<path d="M603 149.5H624.2" stroke="#3a9a3a" stroke-width="2.4"/>
<path d="M609.9 142.6V163.2" stroke="#b81a1a" stroke-width="2.4"/>
<circle cx="609.9" cy="149.5" r="1.8" fill="#c8a830"/>
</g>
<g>
<rect x="601.8" y="169.1" width="23.1" height="23.8" fill="#d2d2d2"/>
<path d="M610.5 177.3L614.5 169.5M610.5 177.3L624.5 179M610.5 177.3L604 192.5M610.5 177.3L620 192.5" stroke="#f4f4f4" stroke-width="1.5"/>
<circle cx="610.5" cy="177.3" r="2.5" fill="#d2d2d2" stroke="#6a6a6a" stroke-width="1.2"/>
</g>
<path d="M602 196.5H626" stroke="#dcdcdc" stroke-width="1"/>
<g>
<path d="M605 210Q603 210 603 212.5V219Q603 221.5 605 221.5M622 210Q624 210 624 212.5V219Q624 221.5 622 221.5" fill="none" stroke="#8a8a8a" stroke-width="1.2"/>
<g fill="#22aa44"><circle cx="606.8" cy="209.1" r="2.6"/><circle cx="613.6" cy="209.1" r="2.6"/><circle cx="620.5" cy="209.1" r="2.6"/>
<circle cx="606.8" cy="222.3" r="2.6"/><circle cx="613.6" cy="222.3" r="2.6"/><circle cx="620.5" cy="222.3" r="2.6"/></g>
</g>
<path d="M605.5 236.1L609.9 243.6L618.6 244.3L623 253" stroke="#1a8a1a" stroke-width="2.3" fill="none" stroke-linecap="round" stroke-linejoin="round"/>
<circle cx="613.3" cy="271.8" r="6.8" fill="#c8c800" stroke="#9a9a8a" stroke-width="2"/>
<circle cx="613.3" cy="271.8" r="2" fill="#e0e040"/>
<g>
<rect x="602.4" y="288.4" width="22.5" height="23.1" fill="#3aa83a"/>
<path d="M613.5 297.5H615L623 310" stroke="#8a8a8a" stroke-width="2.2" fill="none"/>
<circle cx="609.9" cy="297.8" r="3.5" fill="#f4f4f4" stroke="#8a8a8a" stroke-width="2"/>
</g>
<g>
<rect x="603.4" y="317.5" width="20.5" height="21" fill="#f4f8f4" stroke="#3aa83a" stroke-width="2.2"/>
<circle cx="613.3" cy="327.8" r="5.8" fill="#fbe8e8" stroke="#d83a3a" stroke-width="2.4"/>
<path d="M609.5 331.5L617 324" stroke="#d83a3a" stroke-width="2.4"/>
</g>
<path d="M602 345.3H626" stroke="#dcdcdc" stroke-width="1"/>
<g>
<path d="M605.3 354.7L617.5 355.6L622.2 367.8L605.3 370.6" stroke="#2a2ac8" stroke-width="1.6" fill="none"/>
<g fill="#3a9a4a"><circle cx="605.3" cy="354.7" r="2.3"/><circle cx="617.5" cy="355.6" r="2.3"/><circle cx="622.2" cy="367.8" r="2.3"/><circle cx="605.3" cy="370.6" r="2.3"/></g>
</g>
<g>
<circle cx="613.4" cy="390.3" r="9.8" fill="none" stroke="#2a2ac8" stroke-width="1.6"/>
<circle cx="613.4" cy="390.3" r="2.3" fill="#3a9a4a"/><circle cx="620.3" cy="383.8" r="2.3" fill="#3a9a4a"/>
</g>
<g>
<path d="M605.3 411Q619 413 621.6 427" stroke="#2a2ac8" stroke-width="1.6" fill="none"/>
<circle cx="605.3" cy="411" r="2.3" fill="#3a9a4a"/><circle cx="605.3" cy="427" r="2.3" fill="#3a9a4a"/><circle cx="621.6" cy="427" r="2.3" fill="#3a9a4a"/>
</g>
<path d="M605.2 439L618.1 440L621.6 451.6L605.2 454.6Z" fill="#6a6ae8" stroke="#2020c0" stroke-width="1.6" stroke-linejoin="round"/>
</svg>

<div class="t T" style="left:24px;top:5.1px">Pcbnew — C:\Users\oyvda\Documents\Project1\Project1.kicad_pcb</div>
<div class="t T" style="left:4.4px;top:27.8px;transform:scaleX(.85)">File</div>
<div class="t T" style="left:28px;top:27.8px;transform:scaleX(.85)">Edit</div>
<div class="t T" style="left:54.6px;top:27.8px;transform:scaleX(.85)">View</div>
<div class="t T" style="left:85px;top:27.8px;transform:scaleX(.85)">Place</div>
<div class="t T" style="left:116.7px;top:27.8px;transform:scaleX(.85)">Route</div>
<div class="t T" style="left:153px;top:27.8px;transform:scaleX(.85)">Inspect</div>
<div class="t T" style="left:195.4px;top:27.8px;transform:scaleX(.85)">Tools</div>
<div class="t T" style="left:228px;top:27.8px;transform:scaleX(.85)">Preferences</div>
<div class="t T" style="left:290px;top:27.8px;transform:scaleX(.85)">Help</div>
<div class="t T" style="left:6px;top:81.4px">Track: 0,250 mm (9,84 mils) *</div>
<div class="t T" style="left:165.8px;top:81.4px">Via: 0,80 / 0,40 mm (31,5 / 15,7 mils) *</div>
<div class="t T" style="left:429px;top:81.4px">Grid: 1,2700 mm (50,00 mils)</div>
<div class="t T" style="left:627.4px;top:81.4px">Zoom Auto</div>
<div class="t T" style="left:643px;top:50.6px">F.Cu (PgUp)</div>
<div class="t" style="left:632.4px;top:100.5px;font-size:10px;line-height:12px;transform:scaleX(.935)">Layers Manager</div>
<div class="t" style="left:639px;top:118.5px">Layers</div>
<div class="t" style="left:678.4px;top:118.5px">Items</div>
<div class="t" style="left:9.8px;top:466.7px">Pads</div>
<div class="t" style="left:9.8px;top:482.1px">6</div>
<div class="t" style="left:60.4px;top:466.7px">Vias</div>
<div class="t" style="left:60.4px;top:482.1px">0</div>
<div class="t" style="left:108px;top:466.7px">Track Segments</div>
<div class="t" style="left:108px;top:482.1px">0</div>
<div class="t" style="left:210.8px;top:466.7px">Nodes</div>
<div class="t" style="left:210.8px;top:482.1px">6</div>
<div class="t" style="left:269.4px;top:466.7px">Nets</div>
<div class="t" style="left:269.4px;top:482.1px">3</div>
<div class="t" style="left:319.4px;top:466.7px">Unrouted</div>
<div class="t" style="left:319.4px;top:482.1px">3</div>
<div class="t" style="left:114px;top:499.5px">Z 10,91</div>
<div class="t" style="left:171px;top:499.5px">X 147,320000</div>
<div class="t" style="left:243.4px;top:499.5px">Y 91,440000</div>
<div class="t" style="left:332px;top:499.5px">dx 147,320000</div>
<div class="t" style="left:408px;top:499.5px">dy 91,440000</div>
<div class="t" style="left:480px;top:499.5px">dist 173,391</div>
<div class="t" style="left:580px;top:499.5px">mm</div>
<div class="t" style="left:670px;top:137.8px">F.Cu</div>
<div class="t" style="left:670px;top:153.3px">B.Cu</div>
<div class="t" style="left:670px;top:168.9px">F.Adhes</div>
<div class="t" style="left:670px;top:184.4px">B.Adhes</div>
<div class="t" style="left:670px;top:199.9px">F.Paste</div>
<div class="t" style="left:670px;top:215.4px">B.Paste</div>
<div class="t" style="left:670px;top:231.0px">F.SilkS</div>
<div class="t" style="left:670px;top:246.5px">B.SilkS</div>
<div class="t" style="left:670px;top:262.0px">F.Mask</div>
<div class="t" style="left:670px;top:277.6px">B.Mask</div>
<div class="t" style="left:670px;top:293.1px">Dwgs.User</div>
<div class="t" style="left:670px;top:308.6px">Cmts.User</div>
<div class="t" style="left:670px;top:324.2px">Eco1.User</div>
<div class="t" style="left:670px;top:339.7px">Eco2.User</div>
<div class="t" style="left:670px;top:355.2px">Edge.Cuts</div>
<div class="t" style="left:670px;top:370.7px">Margin</div>
<div class="t" style="left:670px;top:386.3px">F.CrtYd</div>
<div class="t" style="left:670px;top:401.8px">B.CrtYd</div>
<div class="t" style="left:670px;top:417.3px">F.Fab</div>
<div class="t" style="left:670px;top:432.9px">B.Fab</div>

</body></html>
